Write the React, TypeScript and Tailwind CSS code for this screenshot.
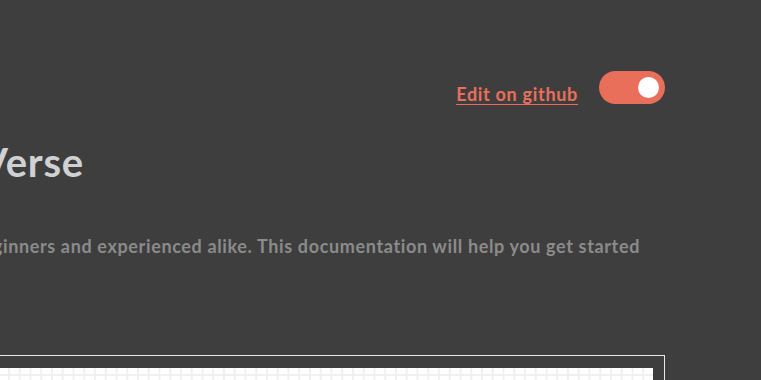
export default function App() {
  return (
    <div className="h-[380px] w-[761px] overflow-hidden bg-[#3e3e3e] font-['Lato',sans-serif]">
      <div className="w-[665px] pt-[71px]">
        {/* TOP BAR */}
        <div className="flex items-end justify-end gap-[21px]">
          <a
            href="#"
            className="mb-[1px] text-[18px] font-bold leading-none tracking-[0.7px] text-[#ea6f5b] underline underline-offset-[3px]"
          >
            Edit on github
          </a>
          <button className="flex h-[33px] w-[66px] items-center justify-end rounded-full bg-[#ea6f5b] pr-[6px]">
            <span className="h-[21px] w-[21px] rounded-full bg-white" />
          </button>
        </div>

        {/* TITLE */}
        <div className="mt-[34px] flex w-[84px] justify-end">
          <h1 className="whitespace-nowrap text-[40px] font-bold leading-[1.2] tracking-[0.8px] text-[#d0d1d3]">
            Verse
          </h1>
        </div>

        {/* INTRO */}
        <div className="mt-[50px] flex justify-end pr-[25px]">
          <p className="whitespace-nowrap text-[18px] font-bold leading-[1.2] tracking-[0.64px] text-[#8b8b8b]">
            for beginners and experienced alike. This documentation will help you get started
          </p>
        </div>

        {/* PREVIEW */}
        <div className="-ml-[43px] mt-[97px] border border-[#e8e8e8] px-[11px] pt-[12px]">
          <div className="h-[60px] bg-white bg-[linear-gradient(to_right,#f0f0f0_2px,transparent_2px),linear-gradient(to_bottom,#f0f0f0_2px,transparent_2px)] bg-[size:10.75px_10.75px] bg-[position:6.75px_6px]" />
        </div>
      </div>
    </div>
  )
}
